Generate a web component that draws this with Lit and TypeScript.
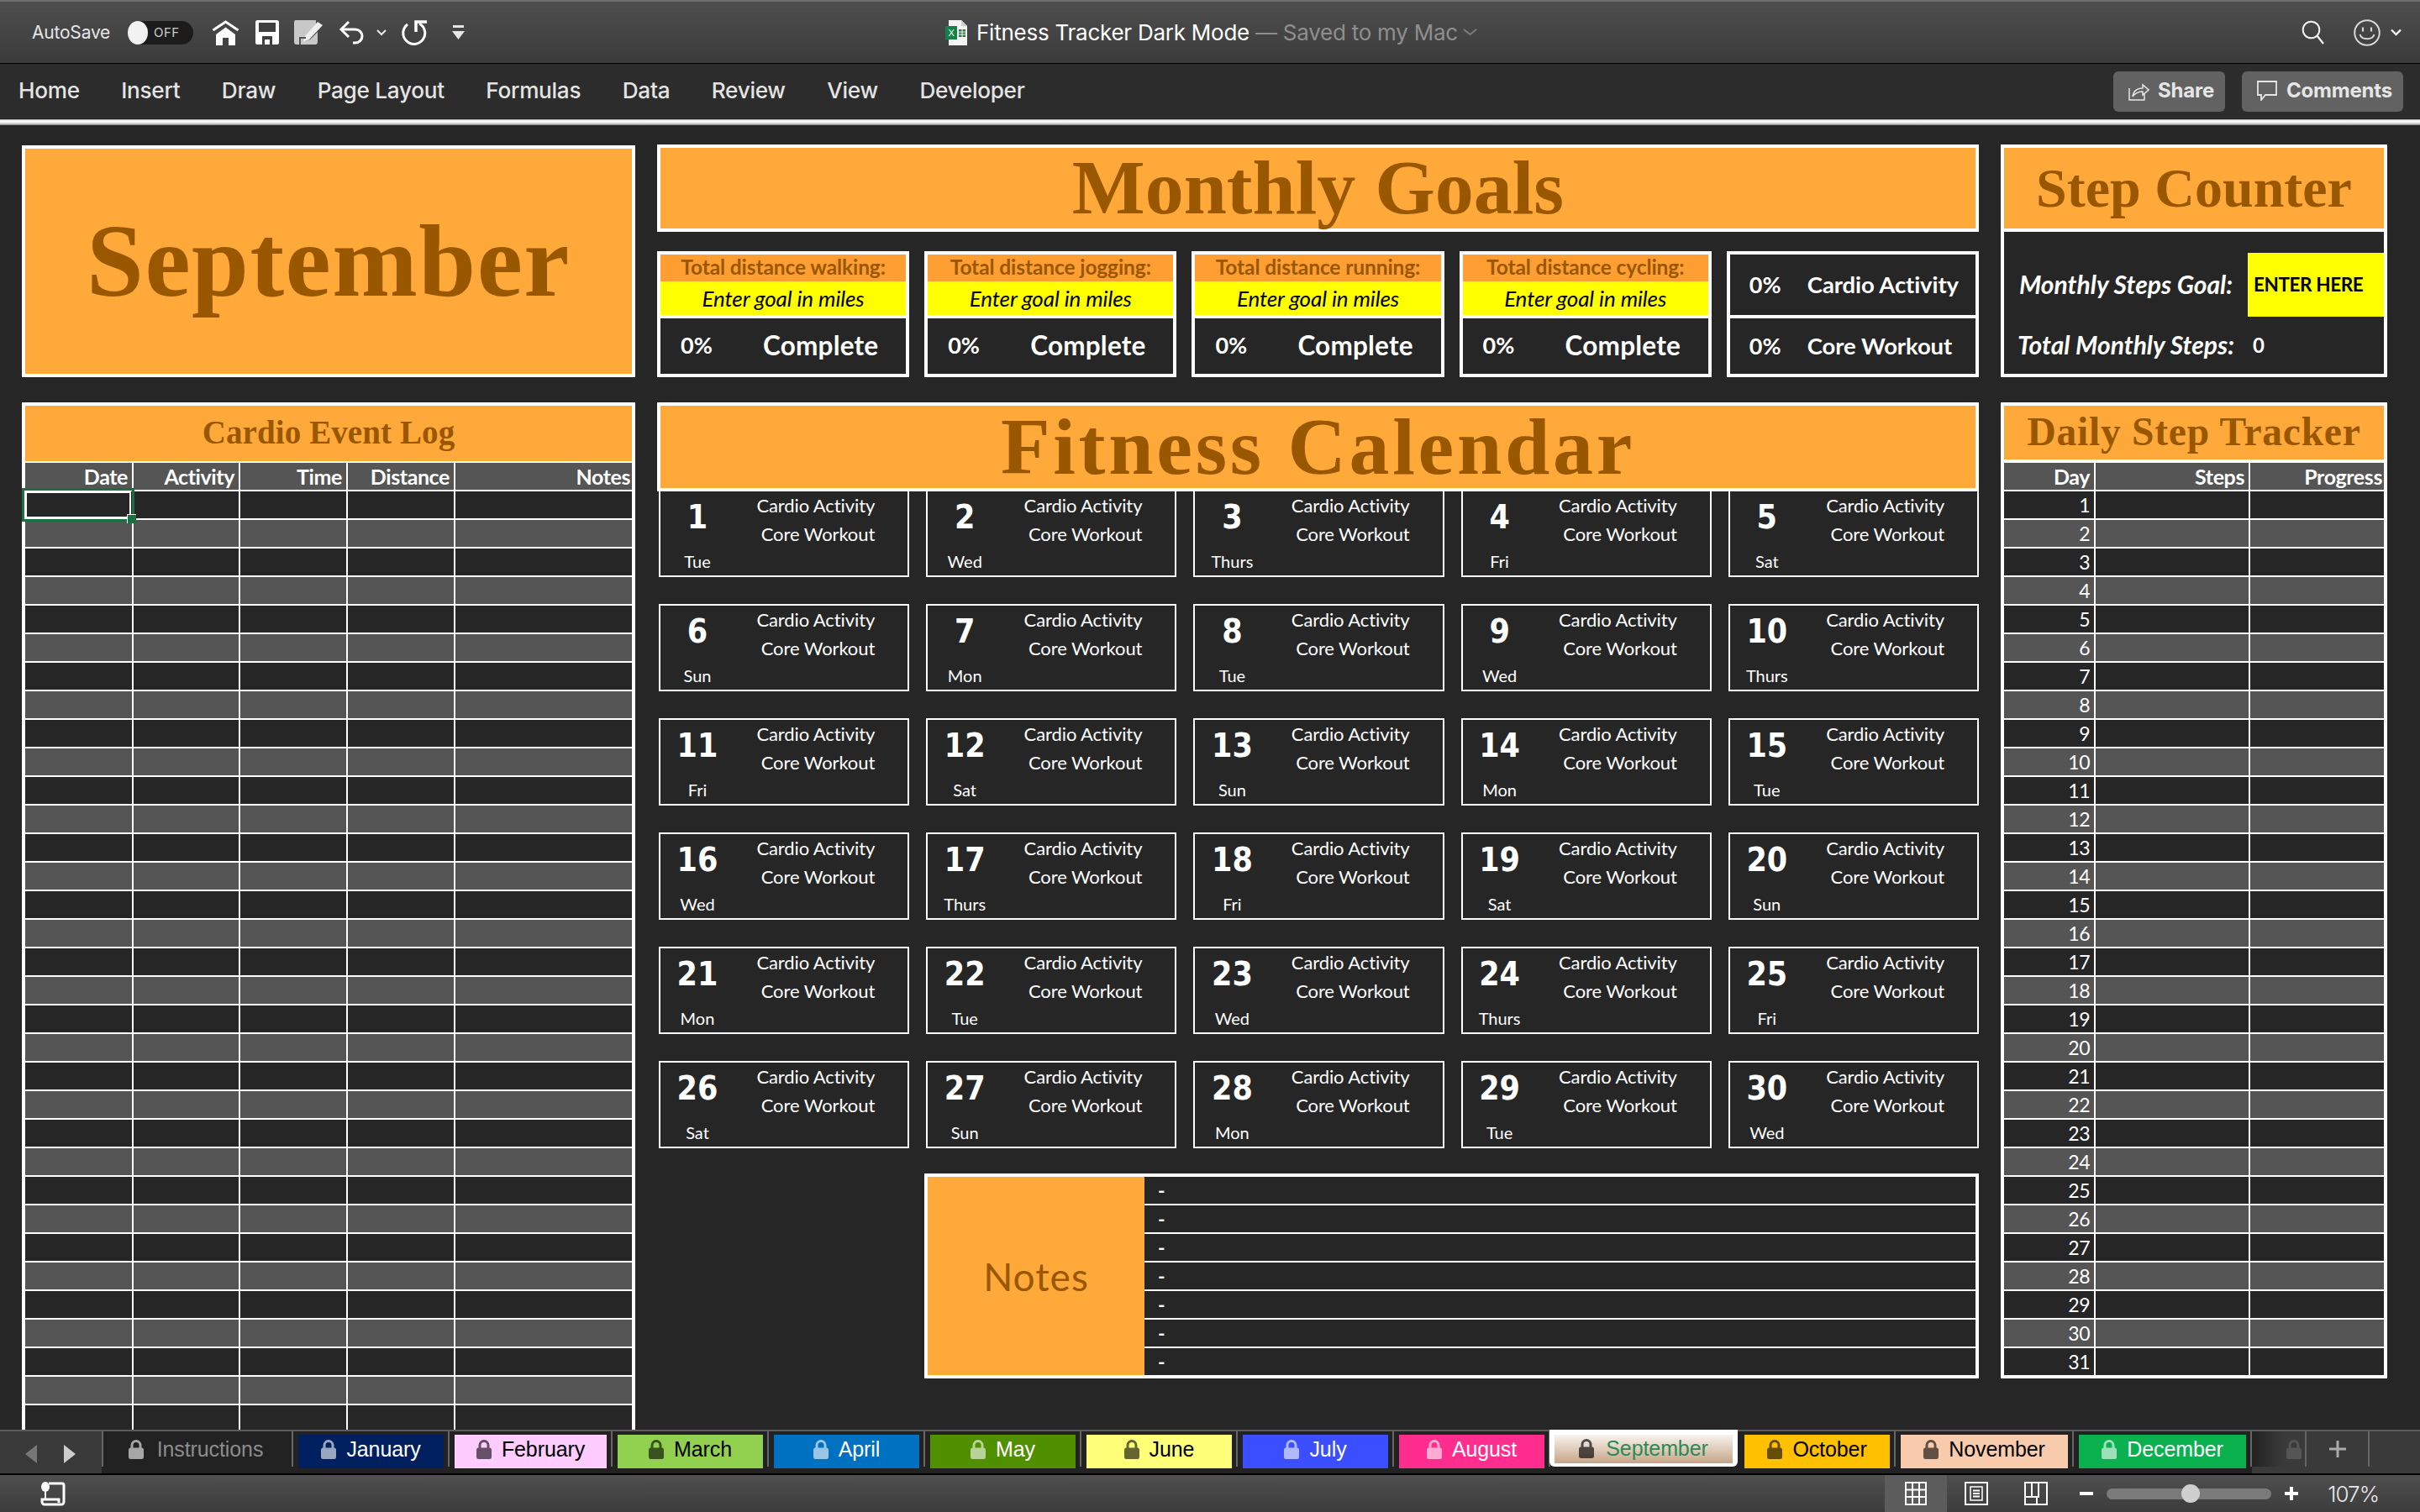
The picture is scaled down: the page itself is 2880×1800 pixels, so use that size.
import { LitElement, html, css, svg } from "lit";
import { customElement } from "lit/decorators.js";

const DAYS = ["Tue", "Wed", "Thurs", "Fri", "Sat", "Sun", "Mon"];
const GOALS = ["walking", "jogging", "running", "cycling"];
const TABS: { n: string; w: number; bg?: string; fg?: string }[] = [
  { n: "January", w: 186, bg: "#002060", fg: "#fff" },
  { n: "February", w: 194, bg: "#ffccff", fg: "#000" },
  { n: "March", w: 186, bg: "#92d050", fg: "#000" },
  { n: "April", w: 186, bg: "#0070c0", fg: "#fff" },
  { n: "May", w: 186, bg: "#4f8f00", fg: "#fff" },
  { n: "June", w: 186, bg: "#ffff7a", fg: "#000" },
  { n: "July", w: 186, bg: "#3b4fff", fg: "#fff" },
  { n: "August", w: 186, bg: "#ff2d8d", fg: "#fff" },
];
const TABS2: { n: string; w: number; bg: string; fg: string }[] = [
  { n: "October", w: 186, bg: "#ffc000", fg: "#000" },
  { n: "November", w: 212, bg: "#f8cbad", fg: "#000" },
  { n: "December", w: 212, bg: "#0bb04f", fg: "#fff" },
];

const lock = svg`<svg class="lock" viewBox="0 0 18 23" width="18" height="23"><path d="M4 11V6.500a5 5 0 0 1 10 0V11" fill="none" stroke="currentColor" stroke-width="3"/><rect x="0" y="9.500" width="18" height="13.500" rx="2.500" fill="currentColor"/></svg>`;

@customElement("app-root")
export class AppRoot extends LitElement {
  static styles = css`
    :host { display: block; width: 2880px; height: 1800px; overflow: hidden; background: #262626; font-family: "Lato", "Liberation Sans", sans-serif; }
    .page { display: flex; flex-direction: column; width: 2880px; height: 1800px; }

    .title { height: 75px; flex: none; box-sizing: border-box; border-top: 2px solid #707070; display: grid; grid-template-columns: 1125px 1fr auto; align-items: center; background: linear-gradient(#4e4e4e, #3b3b3b); font-family: "Inter", "Liberation Sans", sans-serif; }
    .blackline { height: 1px; flex: none; background: #000; }
    .qa { display: flex; align-items: center; padding-left: 38px; color: #e6e6e6; }
    .autosave { font-size: 21px; letter-spacing: -0.2px; width: 114px; }
    .toggle { width: 78px; height: 28px; border-radius: 14px; background: #1c1c1c; display: flex; align-items: center; box-sizing: border-box; }
    .knob { width: 24px; height: 28px; border-radius: 50%; background: #f2f2f2; flex: none; }
    .off { font-size: 15px; margin-left: 7px; color: #ccc; letter-spacing: 0.5px; }
    .qa svg { flex: none; display: block; }
    .i-home { margin-left: 22px; }
    .i-save { margin-left: 19px; }
    .i-edit { margin-left: 18px; }
    .i-undo { margin-left: 17px; }
    .i-chev { margin-left: 13px; }
    .i-redo { margin-left: 18px; }
    .i-cust { margin-left: 29px; }
    .doc { display: flex; align-items: center; font-size: 26px; color: #fff; letter-spacing: -0.25px; white-space: nowrap; }
    .doc .x { margin-right: 11px; flex: none; }
    .doc .saved { color: #8f8f8f; margin-left: 7px; }
    .doc .ch { margin-left: 6px; }
    .acct { display: flex; align-items: center; padding-right: 22px; }
    .acct .smile { margin-left: 35px; }
    .acct .ch2 { margin-left: 12px; }

    .ribbon { height: 65px; flex: none; display: flex; align-items: center; justify-content: space-between; padding: 0 20px 0 22px; background: #2c2c2c; font-family: "Inter", "Liberation Sans", sans-serif; }
    .menu { display: flex; gap: 49.5px; font-size: 26.2px; font-weight: 500; color: #e4e4e4; letter-spacing: -0.3px; padding-bottom: 3px; }
    .btns { display: flex; gap: 20px; }
    .btn { height: 48px; border-radius: 6px; background: #626262; color: #e6e6e6; font-weight: 700; font-size: 24px; letter-spacing: -0.2px; display: flex; align-items: center; box-sizing: border-box; padding-bottom: 2px; }
    .btn.share { width: 133px; padding-left: 18px; gap: 10px; }
    .btn.comm { width: 192px; padding-left: 18px; gap: 11px; }
    .strip { height: 7px; flex: none; background: linear-gradient(#9a9a9a, #fff 25%, #e8e8e8 60%, #888); margin-top: 1px; }

    .sheet { flex: 1; min-height: 0; overflow: hidden; padding: 23px 0 0 26px; display: grid; grid-template-columns: 730px 1573px 460px; column-gap: 26px; align-items: start; box-sizing: border-box; }
    .col { display: flex; flex-direction: column; min-width: 0; }
    .box { border: 4px solid #fff; box-sizing: border-box; }
    .orange { background: #ffa93a; color: #995700; }
    .serif { font-family: "Liberation Serif", serif; font-weight: 700; text-align: center; }

    .sept { height: 276px; margin-top: 1px; display: flex; align-items: center; justify-content: center; font-size: 122px; letter-spacing: 1.5px; }
    .log { margin-top: 30px; border-bottom: 0; }
    .loghead { height: 66px; border-bottom: 2px solid #fff; box-sizing: border-box; height: 68px; display: flex; align-items: center; justify-content: center; font-size: 39px; letter-spacing: 0.1px; padding-bottom: 3px; }
    .row { display: grid; height: 34px; box-sizing: border-box; border-bottom: 2px solid #fff; }
    .log .row { grid-template-columns: 129px 127px 128px 128px 210px; }
    .daily .row { grid-template-columns: 109px 184px 159px; }
    .daily .row:last-child { height: 32px; border-bottom: 0; }
    .row > div { border-right: 2px solid #fff; box-sizing: border-box; text-align: right; padding-right: 5px; color: #fff; font-size: 23px; line-height: 33px; letter-spacing: -0.5px; white-space: nowrap; }
    .row > div:last-child { border-right: 0; }
    .row.gray { background: #555; }
    .row.hdr { background: #555; }
    .row.hdr > div { font-weight: 700; font-size: 25px; letter-spacing: -0.4px; padding-right: 5px; }
    .row.hdr > div:last-child { padding-right: 2px; }
    .logwrap { position: relative; }
    .sel { position: absolute; left: -4px; top: -4px; width: 134px; height: 40px; box-sizing: border-box; border: 3px solid #1d6f42; }
    .sel::before { content: ""; position: absolute; inset: 1px; border: 2px solid #fff; }
    .handle { position: absolute; right: -5px; bottom: -5px; width: 11px; height: 11px; background: #1d6f42; border: 1px solid #fff; border-right: 0; border-bottom: 0; box-sizing: border-box; }

    .goalhead { height: 104px; display: flex; align-items: center; justify-content: center; font-size: 92px; letter-spacing: 0; padding-bottom: 2px; }
    .cards { display: grid; grid-template-columns: repeat(5, 1fr); column-gap: 18px; margin-top: 23px; height: 150px; }
    .card { display: flex; flex-direction: column; }
    .gt { height: 32px; background: #ff9f33; color: #995700; font-weight: 700; text-align: center; font-size: 24.5px; line-height: 30px; letter-spacing: -0.1px; white-space: nowrap; }
    .gy { height: 40px; background: #ff0; color: #000; font-style: italic; text-align: center; font-size: 26px; line-height: 40px; letter-spacing: -0.1px; white-space: nowrap; }
    .gs { height: 4px; background: #fff; }
    .gb { flex: 1; display: grid; grid-template-columns: 122px 1fr; align-items: center; color: #fff; font-weight: 700; padding-bottom: 3px; }
    .gb .p { padding-left: 24px; font-size: 27px; }
    .gb .l { font-size: 31.5px; letter-spacing: 0.2px; }
    .mix { display: flex; flex-direction: column; }
    .mix .m { height: 72px; display: grid; grid-template-columns: 92px 1fr; align-items: center; color: #fff; font-weight: 700; padding-bottom: 2px; box-sizing: border-box; }
    .mix .m.b { height: auto; flex: 1; }
    .mix .p { padding-left: 23px; font-size: 27px; }
    .mix .l { font-size: 27.5px; letter-spacing: -0.1px; white-space: nowrap; }

    .fithead { height: 106px; margin-top: 30px; display: flex; align-items: center; justify-content: center; font-size: 96px; letter-spacing: 3.7px; padding-bottom: 2px; }
    .cal { display: grid; grid-template-columns: repeat(5, 1fr); grid-auto-rows: 104px; column-gap: 18px; row-gap: 32px; margin-top: -2px; }
    .cell { margin-left: 2px; border: 2px solid #fff; box-sizing: border-box; display: flex; color: #fff; justify-content: space-between; }
    .cl { width: 88px; text-align: center; flex: none; }
    .num { height: 62px; line-height: 62px; font-family: "DejaVu Sans Condensed", "DejaVu Sans", sans-serif; font-stretch: condensed; font-weight: 700; font-size: 39px; }
    .day { margin-top: 6px; line-height: 30px; font-size: 20px; }
    .cr { padding: 0 39px 0 0; text-align: right; font-size: 22px; line-height: 34px; letter-spacing: -0.1px; }

    .notes { margin: 30px 0 0 318px; height: 244px; display: grid; grid-template-columns: 258px 1fr; }
    .nlabel { display: flex; align-items: center; justify-content: center; font-size: 46px; letter-spacing: 1px; }
    .nrow { height: 34px; box-sizing: border-box; border-bottom: 2px solid #fff; padding-left: 16px; color: #fff; font-size: 23px; line-height: 32px; font-weight: 700; }
    .nrow:last-child { height: 32px; border-bottom: 0; }

    .stephead { height: 96px; border-bottom: 4px solid #fff; box-sizing: content-box; display: flex; align-items: center; justify-content: center; font-size: 66px; letter-spacing: 0; }
    .step { height: 277px; }
    .sgrid { display: grid; grid-template-columns: 290px 1fr; grid-template-rows: 76px 68px; margin-top: 25px; color: #fff; align-items: center; }
    .sl { font-weight: 700; font-style: italic; text-align: center; font-size: 30px; letter-spacing: 0; white-space: nowrap; padding-bottom: 2px; }
    .enter { height: 76px; background: #ff0; color: #000; font-weight: 700; font-size: 22.5px; line-height: 76px; padding-left: 7px; letter-spacing: -0.4px; white-space: nowrap; }
    .zero { font-weight: 700; font-size: 24px; padding-left: 6px; padding-bottom: 2px; }
    .daily { margin-top: 30px; height: 1162px; }
    .dailyhead { height: 68px; border-bottom: 4px solid #fff; box-sizing: border-box; display: flex; align-items: center; justify-content: center; font-size: 47.5px; letter-spacing: 0.75px; padding-bottom: 3px; }

    .tabbar { height: 52px; flex: none; box-sizing: border-box; border-top: 2px solid #5c5c5c; display: flex; background: #3a3a3a; font-family: "Liberation Sans", sans-serif; }
    .nav { width: 121px; flex: none; display: flex; align-items: center; padding: 4px 0 0 30px; gap: 32px; box-sizing: border-box; }
    .tabs { display: flex; background: #222; }
    .tw { height: 42px; box-sizing: border-box; border-right: 2px solid #666; flex: none; padding: 4px 5px 0 6px; }
    .first { border-left: 2px solid #666; }
    .tab { height: 40px; display: flex; align-items: center; justify-content: center; gap: 12px; font-size: 25px; padding-bottom: 5px; box-sizing: border-box; letter-spacing: -0.1px; }
    .lock { opacity: 0.6; flex: none; }
    .tab.instr { color: #8c8c8c; gap: 16px; padding-right: 5px; }
    .tab.instr .lock { opacity: 1; color: #a6a6a6; }
    .seltw { flex: none; width: 224px; height: 44px; margin-top: -2px; margin-left: -1px; background: #fff; box-sizing: border-box; padding: 6px 6px 4px 6px; border-radius: 0 0 6px 6px; position: relative; margin-right: 2px; }
    .seltab { height: 34px; display: flex; align-items: center; justify-content: center; gap: 14px; background: linear-gradient(#f8f4ef, #c7a487); color: #2c8a57; font-size: 25px; letter-spacing: -0.1px; padding-bottom: 2px; box-sizing: border-box; font-weight: 400; }
    .seltab .lock { color: #000; opacity: 0.65; }
    .plus { display: flex; flex: none; }
    .more { width: 65px; height: 42px; box-sizing: border-box; border-right: 2px solid #666; display: flex; align-items: center; justify-content: flex-end; padding-right: 4px; background: linear-gradient(90deg, #222, #3a3a3a 60%); }
    .more .lock { opacity: 0.35; color: #888; }
    .pl { width: 75px; height: 42px; box-sizing: border-box; border-right: 2px solid #666; display: flex; align-items: center; justify-content: center; color: #aaa; }

    .status { height: 46px; flex: none; border-top: 2px solid #000; box-sizing: border-box; background: linear-gradient(#4f4f4f, #3c3c3c); display: flex; align-items: center; font-family: "Inter", "Liberation Sans", sans-serif; color: #fff; }
    .macro { margin-left: 48px; }
    .views { margin-left: auto; display: flex; height: 100%; align-items: center; }
    .vbox { width: 74px; height: 100%; background: #5c5c5c; display: flex; align-items: center; justify-content: center; }
    .v2 { margin-left: 21px; }
    .v3 { margin-left: 43px; }
    .minus { margin-left: 38px; width: 16px; height: 4px; background: #fff; }
    .slider { margin-left: 16px; width: 196px; height: 13px; border-radius: 7px; background: #7a7a7a; position: relative; }
    .thumb { position: absolute; left: 89px; top: -5px; width: 22px; height: 22px; border-radius: 50%; background: #cfcfcf; }
    .zplus { margin-left: 16px; }
    .pct { margin: 0 49px 0 35px; font-size: 26px; letter-spacing: -1px; color: #e8e8e8; font-weight: 300; }
  `;

  private cal() {
    const cells = [];
    for (let d = 1; d <= 30; d++) {
      cells.push(html`<div class="cell"><div class="cl"><div class="num">${d}</div><div class="day">${DAYS[(d - 1) % 7]}</div></div><div class="cr">Cardio Activity<br />Core Workout</div></div>`);
    }
    return cells;
  }

  private logRows() {
    const rows = [];
    for (let i = 0; i < 33; i++) {
      rows.push(html`<div class="row ${i % 2 ? "gray" : ""}"><div></div><div></div><div></div><div></div><div></div></div>`);
    }
    return rows;
  }

  private dayRows() {
    const rows = [];
    for (let i = 1; i <= 31; i++) {
      rows.push(html`<div class="row ${i % 2 ? "" : "gray"}"><div>${i}</div><div></div><div></div></div>`);
    }
    return rows;
  }

  private tabStyle(t: { w: number }) {
    return `width:${t.w}px`;
  }
  private tabColor(t: { bg?: string; fg?: string }) {
    return `background:${t.bg};color:${t.fg}`;
  }

  render() {
    return html`<div class="page">
      <div class="title">
        <div class="qa">
          <div class="autosave">AutoSave</div>
          <div class="toggle"><div class="knob"></div><div class="off">OFF</div></div>
          <svg class="i-home" width="33" height="30" viewBox="0 0 33 30"><path d="M1.500 12 16.500 2 31.500 12" fill="none" stroke="#fff" stroke-width="3"/><path d="M16.500 8.500 28 17v13h-8v-9h-7v9H5V17z" fill="#fff"/></svg>
          <svg class="i-save" width="28" height="29" viewBox="0 0 28 29"><path d="M2.500 0h23A2.500 2.500 0 0 1 28 2.500v24a2.500 2.500 0 0 1-2.500 2.500h-23A2.500 2.500 0 0 1 0 26.500v-24A2.500 2.500 0 0 1 2.500 0z" fill="#fff"/><rect x="4" y="3" width="20" height="11" fill="#3f3f3f"/><path d="M8 29v-10h12v10h-3v-6h-6v6z" fill="#3f3f3f"/></svg>
          <svg class="i-edit" width="36" height="29" viewBox="0 0 36 29"><path d="M2 0h24v5L14 19l-1 6 6-2 9-9v12a3 3 0 0 1-3 3H3a3 3 0 0 1-3-3V2a2 2 0 0 1 2-2z" fill="#c8c8c8"/><path d="M28 2l6 4-16 17-7 3 2-7z" fill="#efefef"/><path d="M6 29v-9h8v2H8v7z" fill="#555"/></svg>
          <svg class="i-undo" width="32" height="31" viewBox="0 0 32 31"><path d="M12 3 3 12l9 9" fill="none" stroke="#fff" stroke-width="3"/><path d="M3 12h17a8 8 0 0 1 8 8 8 8 0 0 1-8 8h-3" fill="none" stroke="#fff" stroke-width="3"/></svg>
          <svg class="i-chev" width="12" height="8" viewBox="0 0 12 8"><path d="M1 1l5 5 5-5" fill="none" stroke="#e6e6e6" stroke-width="2"/></svg>
          <svg class="i-redo" width="31" height="31" viewBox="0 0 31 31"><path d="M7 6A13 13 0 1 0 21 5" fill="none" stroke="#fff" stroke-width="3"/><path d="M17 15V3h13" fill="none" stroke="#fff" stroke-width="3.500"/></svg>
          <svg class="i-cust" width="15" height="18" viewBox="0 0 15 18"><rect x="1" y="0" width="13" height="3" fill="#e6e6e6"/><path d="M0 7h15l-7.500 10z" fill="#e6e6e6"/></svg>
        </div>
        <div class="doc">
          <svg class="x" width="26" height="30" viewBox="0 0 26 30"><path d="M4 0h15l7 7v23H4z" fill="#f4f4f4"/><path d="M19 0l7 7h-7z" fill="#cfcfcf"/><rect x="0" y="7" width="14" height="16" fill="#14804a"/><text x="3.500" y="19" font-size="11" fill="#fff" font-family="Liberation Sans">X</text><path d="M16 11h8v9h-8z" fill="#2a7a4e"/><path d="M16 14h8M16 17h8M20 11v9" stroke="#f4f4f4" stroke-width="1"/></svg>
          <span>Fitness Tracker Dark Mode</span><span class="saved">— Saved to my Mac</span>
          <svg class="ch" width="17" height="9" viewBox="0 0 17 9"><path d="M1 1l7.500 6L16 1" fill="none" stroke="#7d7d7d" stroke-width="2"/></svg>
        </div>
        <div class="acct">
          <svg width="27" height="30" viewBox="0 0 27 30"><circle cx="11.500" cy="11.500" r="9.800" fill="none" stroke="#f2f2f2" stroke-width="2"/><path d="M18.500 18.500 26 28" stroke="#f2f2f2" stroke-width="2.200"/></svg>
          <svg class="smile" width="32" height="32" viewBox="0 0 32 32"><circle cx="16" cy="16" r="14.800" fill="none" stroke="#d8d8d8" stroke-width="2"/><path d="M11 9.500v5M21 9.500v5" stroke="#d8d8d8" stroke-width="2.200"/><path d="M7.500 18c2 7 15 7 17 0" fill="none" stroke="#d8d8d8" stroke-width="2"/></svg>
          <svg class="ch2" width="13" height="9" viewBox="0 0 13 9"><path d="M1 1.500l5.500 5.500L12 1.500" fill="none" stroke="#f2f2f2" stroke-width="2.400"/></svg>
        </div>
      </div>
      <div class="blackline"></div>
      <div class="ribbon">
        <div class="menu"><span>Home</span><span>Insert</span><span>Draw</span><span>Page Layout</span><span>Formulas</span><span>Data</span><span>Review</span><span>View</span><span>Developer</span></div>
        <div class="btns">
          <div class="btn share"><svg width="25" height="24" viewBox="0 0 25 24"><path d="M1 9v14h18v-7" fill="none" stroke="#e6e6e6" stroke-width="1.500"/><path d="M5 19c1-7 5-10 12-10V5l7 6-7 6v-4c-5 0-9 2-12 6z" fill="none" stroke="#e6e6e6" stroke-width="1.500"/></svg>Share</div>
          <div class="btn comm"><svg width="24" height="24" viewBox="0 0 24 24"><path d="M1 1h22v16H10l-5 6v-6H1z" fill="none" stroke="#e6e6e6" stroke-width="1.800"/></svg>Comments</div>
        </div>
      </div>
      <div class="strip"></div>

      <div class="sheet">
        <div class="col">
          <div class="box orange serif sept">September</div>
          <div class="box log">
            <div class="orange serif loghead">Cardio Event Log</div>
            <div class="row hdr"><div>Date</div><div>Activity</div><div>Time</div><div>Distance</div><div>Notes</div></div>
            <div class="logwrap">
              <div>${this.logRows()}</div>
              <div class="sel"><div class="handle"></div></div>
            </div>
          </div>
        </div>

        <div class="col">
          <div class="box orange serif goalhead">Monthly Goals</div>
          <div class="cards">
            ${GOALS.map(
              (g) => html`<div class="box card">
                <div class="gt">Total distance ${g}:</div>
                <div class="gy">Enter goal in miles</div>
                <div class="gs"></div>
                <div class="gb"><div class="p">0%</div><div class="l">Complete</div></div>
              </div>`
            )}
            <div class="box mix">
              <div class="m"><div class="p">0%</div><div class="l">Cardio Activity</div></div>
              <div class="gs"></div>
              <div class="m b"><div class="p">0%</div><div class="l">Core Workout</div></div>
            </div>
          </div>
          <div class="box orange serif fithead">Fitness Calendar</div>
          <div class="cal">${this.cal()}</div>
          <div class="box notes">
            <div class="orange nlabel">Notes</div>
            <div>${[0, 1, 2, 3, 4, 5, 6].map(() => html`<div class="nrow">-</div>`)}</div>
          </div>
        </div>

        <div class="col">
          <div class="box step">
            <div class="orange serif stephead">Step Counter</div>
            <div class="sgrid">
              <div class="sl">Monthly Steps Goal:</div><div class="enter">ENTER HERE</div>
              <div class="sl">Total Monthly Steps:</div><div class="zero">0</div>
            </div>
          </div>
          <div class="box daily">
            <div class="orange serif dailyhead">Daily Step Tracker</div>
            <div class="row hdr"><div>Day</div><div>Steps</div><div>Progress</div></div>
            ${this.dayRows()}
          </div>
        </div>
      </div>

      <div class="tabbar">
        <div class="nav">
          <svg width="14" height="22" viewBox="0 0 14 22"><path d="M14 0v22L0 11z" fill="#777"/></svg>
          <svg width="14" height="22" viewBox="0 0 14 22"><path d="M0 0v22l14-11z" fill="#ccc"/></svg>
        </div>
        <div class="tabs">
          <div class="tw first" style=${this.tabStyle({ w: 228 })}><div class="tab instr">${lock}Instructions</div></div>
          ${TABS.map((t) => html`<div class="tw" style=${this.tabStyle(t)}><div class="tab" style=${this.tabColor(t)}>${lock}${t.n}</div></div>`)}
          <div class="seltw"><div class="seltab">${lock}September</div></div>
          ${TABS2.map((t) => html`<div class="tw" style=${this.tabStyle(t)}><div class="tab" style=${this.tabColor(t)}>${lock}${t.n}</div></div>`)}
        </div>
        <div class="plus">
          <div class="more">${lock}</div>
          <div class="pl"><svg width="20" height="20" viewBox="0 0 20 20"><path d="M10 0v20M0 10h20" stroke="#aaa" stroke-width="3"/></svg></div>
        </div>
      </div>

      <div class="status">
        <svg class="macro" width="30" height="30" viewBox="0 0 30 30"><ellipse cx="6" cy="7" rx="5" ry="6" fill="#fff"/><path d="M10 3h16a2 2 0 0 1 2 2v20a3 3 0 0 1-3 3H5a3 3 0 0 1-3-3v-3h20v4" fill="none" stroke="#fff" stroke-width="3"/><path d="M6 13v9" stroke="#fff" stroke-width="2"/></svg>
        <div class="views">
          <div class="vbox"><svg width="26" height="28" viewBox="0 0 26 28"><path d="M1 1h24v26H1zM9 1v26M17 1v26M1 9.500h24M1 18h24" fill="none" stroke="#fff" stroke-width="2"/></svg></div>
          <svg class="v2" width="28" height="28" viewBox="0 0 28 28"><path d="M1 1h26v26H1z" fill="none" stroke="#fff" stroke-width="2"/><path d="M7 6h14v16H7z" fill="none" stroke="#fff" stroke-width="1.500"/><path d="M10 10.500h8M10 14h8M10 17.500h8" stroke="#fff" stroke-width="2"/></svg>
          <svg class="v3" width="28" height="28" viewBox="0 0 28 28"><path d="M1 1h26v26H1zM1 18h14v9M9 1v17M17 1v17H15" fill="none" stroke="#fff" stroke-width="2"/></svg>
          <div class="minus"></div>
          <div class="slider"><div class="thumb"></div></div>
          <svg class="zplus" width="16" height="16" viewBox="0 0 16 16"><path d="M8 0v16M0 8h16" stroke="#fff" stroke-width="4"/></svg>
          <div class="pct">107%</div>
        </div>
      </div>
    </div>`;
  }
}
